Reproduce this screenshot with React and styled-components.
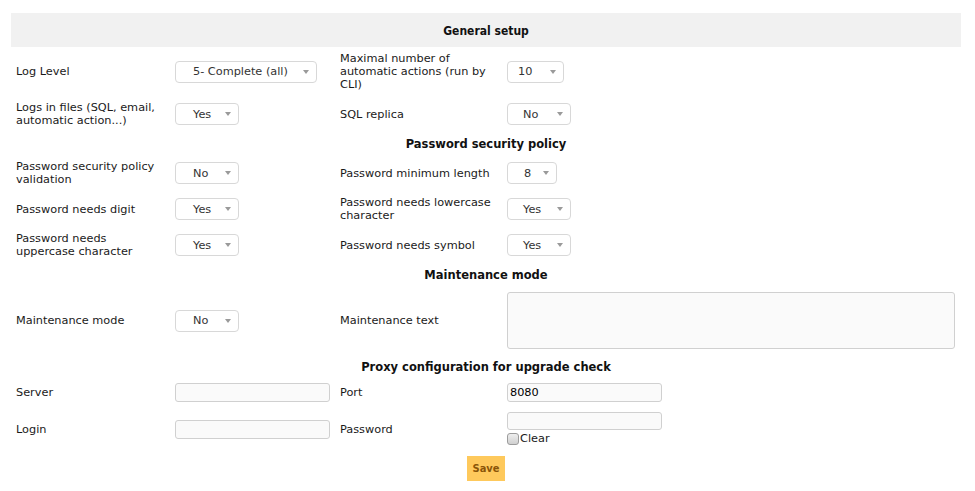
import styled, { createGlobalStyle } from "styled-components"

const GlobalStyle = createGlobalStyle`
  body {
    margin: 0;
    background: #fff;
    font-family: "DejaVu Sans", Verdana, sans-serif;
    color: #1a1a1a;
  }
`

const Page = styled.div`
  padding: 13px 0 0 11px;
`

const Form = styled.div`
  width: 950px;
  display: grid;
  grid-template-columns: 159px 165px 167px 1fr;
  font-size: 11.3px;
  line-height: 13px;
`

const HeaderRow = styled.div`
  grid-column: 1 / -1;
  box-sizing: border-box;
  height: 34px;
  padding-top: 3px;
  background: #f1f1f1;
  display: flex;
  align-items: center;
  justify-content: center;
  font-family: "DejaVu Sans Condensed", "DejaVu Sans", sans-serif;
  font-weight: bold;
  font-size: 12px;
  color: #111;
`

const SectionTitle = styled.div`
  grid-column: 1 / -1;
  box-sizing: border-box;
  height: 23px;
  padding-top: 2px;
  display: flex;
  align-items: center;
  justify-content: center;
  font-weight: bold;
  font-size: 11.5px;
  color: #111;
`

const Cell = styled.div`
  padding: 5px;
  display: flex;
  flex-direction: column;
  align-items: flex-start;
  justify-content: center;
`

const Label = styled.div`
  padding: 5px;
  display: flex;
  align-items: center;
`

const SelectBox = styled.div`
  box-sizing: border-box;
  width: ${props => props.$width}px;
  height: 22px;
  border: 1px solid #d8d8d8;
  border-radius: 4px;
  background: #fff;
  display: flex;
  align-items: center;
  padding-left: ${props => props.$pad}px;
  padding-right: 7px;
  color: #333;
  white-space: nowrap;
`

const Arrow = styled.span`
  margin-left: auto;
  width: 0;
  height: 0;
  border-left: 3px solid transparent;
  border-right: 3px solid transparent;
  border-top: 4px solid #9a9a9a;
`

const TextInput = styled.div`
  box-sizing: border-box;
  width: 155px;
  height: ${props => props.$short ? 18 : 19}px;
  border: 1px solid #d0d0d0;
  border-radius: 3px;
  background: #fafafa;
  padding-left: 2px;
  display: flex;
  align-items: center;
  color: #000;
`

const TextArea = styled.div`
  box-sizing: border-box;
  width: 448px;
  height: 57px;
  margin: 1px 0;
  border: 1px solid #d0d0d0;
  border-radius: 3px;
  background: #fafafa;
`

const CheckRow = styled.label`
  display: flex;
  align-items: center;
  gap: 1px;
  margin: 2px 0 1px;
`

const CheckBox = styled.span`
  box-sizing: border-box;
  width: 12px;
  height: 12px;
  border: 1px solid #9c9c9c;
  border-radius: 3px;
  background: linear-gradient(#eeeeee, #d0d0d0);
`

const SaveRow = styled.div`
  grid-column: 1 / -1;
  display: flex;
  justify-content: center;
  padding: 5px 0;
`

const SaveButton = styled.button`
  width: 38px;
  height: 25px;
  border: none;
  padding: 0;
  background: #fec95c;
  color: #8a5508;
  font-family: "DejaVu Sans Condensed", "DejaVu Sans", sans-serif;
  font-weight: bold;
  font-size: 11px;
`

function Select ({ value, width = 64, pad = 17 }) {
  return (
    <SelectBox $width={width} $pad={pad}>
      {value}
      <Arrow />
    </SelectBox>
  )
}

const sections = [
  {
    rows: [
      ["Log Level", <Select value="5- Complete (all)" width={142} />,
        "Maximal number of automatic actions (run by CLI)", <Select value="10" width={57} pad={10} />],
      ["Logs in files (SQL, email, automatic action...)", <Select value="Yes" />,
        "SQL replica", <Select value="No" pad={15} />]
    ]
  },
  {
    title: "Password security policy",
    rows: [
      ["Password security policy validation", <Select value="No" />,
        "Password minimum length", <Select value="8" width={50} pad={16} />],
      ["Password needs digit", <Select value="Yes" />,
        "Password needs lowercase character", <Select value="Yes" pad={15} />],
      ["Password needs uppercase character", <Select value="Yes" />,
        "Password needs symbol", <Select value="Yes" pad={15} />]
    ]
  },
  {
    title: "Maintenance mode",
    rows: [
      ["Maintenance mode", <Select value="No" />,
        "Maintenance text", <TextArea />]
    ]
  },
  {
    title: "Proxy configuration for upgrade check",
    rows: [
      ["Server", <TextInput />, "Port", <TextInput>8080</TextInput>],
      ["Login", <TextInput />, "Password", (
        <>
          <TextInput $short />
          <CheckRow><CheckBox />Clear</CheckRow>
        </>
      )]
    ]
  }
]

function App () {
  return (
    <Page>
      <GlobalStyle />
      <Form>
        <HeaderRow>General setup</HeaderRow>
        {sections.map((section, i) => (
          <>
            {section.title && <SectionTitle key={'t' + i}>{section.title}</SectionTitle>}
            {section.rows.map(([l1, f1, l2, f2], j) => (
              <>
                <Label key={`a${i}${j}`}>{l1}</Label>
                <Cell key={`b${i}${j}`}>{f1}</Cell>
                <Label key={`c${i}${j}`}>{l2}</Label>
                <Cell key={`d${i}${j}`}>{f2}</Cell>
              </>
            ))}
          </>
        ))}
        <SaveRow>
          <SaveButton>Save</SaveButton>
        </SaveRow>
      </Form>
    </Page>
  )
}

export default App
